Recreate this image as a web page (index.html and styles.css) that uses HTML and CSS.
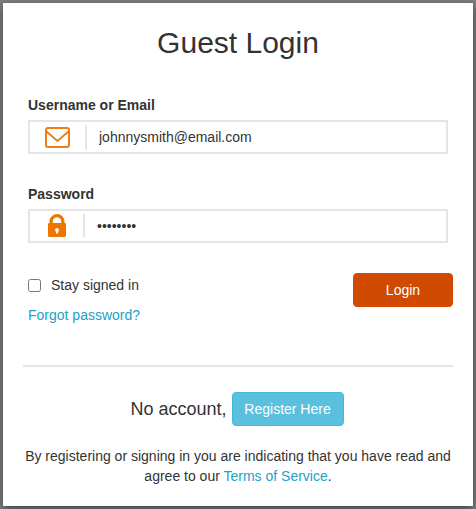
FILE: index.html
```html
<!DOCTYPE html>
<html lang="en">
<head>
<meta charset="utf-8">
<title>Guest Login</title>
<link rel="stylesheet" href="styles.css">
</head>
<body>
<main class="modal">
  <h1 class="title">Guest Login</h1>
  <form class="form">
    <label class="label" for="user">Username or Email</label>
    <div class="field">
      <span class="icon icon-mail">
        <svg width="25" height="21" viewBox="0 0 25 21" aria-hidden="true"><rect x="1" y="1" width="23" height="19" rx="2" fill="none" stroke="#ee7e1a" stroke-width="2"/><path d="M1.500 4.500 12.500 14 23.500 4.500" fill="none" stroke="#ee7e1a" stroke-width="2"/></svg>
      </span>
      <input class="input" id="user" type="text" value="johnnysmith@email.com">
    </div>
    <label class="label label-pass" for="pass">Password</label>
    <div class="field">
      <span class="icon icon-lock">
        <svg width="18" height="23" viewBox="0 0 18 23" aria-hidden="true"><path fill-rule="evenodd" fill="#ee7600" d="M1.500 9V7.500a7.500 7.500 0 0 1 15 0V9h.2A1.300 1.300 0 0 1 18 10.300V21.500A1.500 1.500 0 0 1 16.500 23H1.500A1.500 1.500 0 0 1 0 21.500V10.300A1.300 1.300 0 0 1 1.300 9ZM4.800 9h8.400V7.500a4.200 4.200 0 0 0-8.400 0Z"/><path fill="#fff" d="M9 14a2 2 0 0 1 1 3.700V19.500H8V17.700A2 2 0 0 1 9 14Z"/></svg>
      </span>
      <input class="input" id="pass" type="password" value="password">
    </div>
    <div class="actions">
      <div class="options">
        <label class="stay"><input class="check" type="checkbox"><span>Stay signed in</span></label>
        <a class="link forgot" href="#">Forgot password?</a>
      </div>
      <button class="btn btn-login" type="button">Login</button>
    </div>
  </form>
  <hr class="rule">
  <div class="register">
    <span class="no-account">No account,</span>
    <button class="btn btn-register" type="button">Register Here</button>
  </div>
  <p class="terms">By registering or signing in you are indicating that you have read and agree to our <a class="link" href="#">Terms of Service</a>.</p>
</main>
</body>
</html>
```
FILE: styles.css
```css
* { box-sizing: border-box; }
html, body { margin: 0; height: 100%; }
body {
  background: #7f7f7f;
  padding: 3px;
  font-family: "Liberation Sans", Arial, sans-serif;
  font-size: 14px;
  line-height: 20px;
  color: #333;
  overflow: hidden;
}
.modal {
  background: #fff;
  height: 503px;
  padding: 0 20px;
  box-shadow: 0 3px 9px rgba(0, 0, 0, 0.5);
}
.title {
  margin: 0;
  padding-top: 22px;
  height: 92px;
  font-size: 30px;
  font-weight: 400;
  line-height: 36px;
  text-align: center;
}
.form { padding: 0 0 0 5px; }
.label {
  display: block;
  font-weight: 700;
  height: 25px;
  line-height: 20px;
}
.label-pass { margin-top: 30px; }
.field {
  display: flex;
  align-items: center;
  width: 420px;
  height: 34px;
  border: 2px solid #e5e5e5;
}
.icon {
  display: flex;
  align-items: center;
  justify-content: center;
  border-right: 2px solid #e5e5e5;
}
.icon-mail { width: 57px; height: 25px; }
.icon-lock { width: 55px; height: 23px; margin-bottom: 1px; }
.input {
  flex: 1;
  min-width: 0;
  border: 0;
  outline: 0;
  padding: 0 0 0 12px;
  background: transparent;
  font: inherit;
  color: #333;
}
.actions {
  display: flex;
  justify-content: space-between;
  width: 425px;
  margin-top: 30px;
}
.options { display: flex; flex-direction: column; }
.stay {
  display: flex;
  align-items: center;
  height: 24px;
}
.check { width: 13px; height: 13px; margin: 0 10px 0 0; }
.forgot { margin-top: 8px; }
.link { color: #239fc8; text-decoration: none; }
.btn {
  font: inherit;
  color: #fff;
  border-radius: 4px;
  height: 34px;
  padding: 0;
  cursor: pointer;
}
.btn-login {
  width: 100px;
  background: #d04a02;
  border: 1px solid #d04a02;
}
.rule {
  margin: 40px 0 0;
  border: 0;
  height: 2px;
  background: #e5e5e5;
}
.register {
  display: flex;
  align-items: center;
  justify-content: center;
  gap: 5px;
  margin-top: 25px;
  padding-right: 2px;
}
.no-account { font-size: 18px; }
.btn-register {
  width: 112px;
  background: #5bc0de;
  border: 1px solid #46b8da;
}
.terms {
  margin: 20px 0 0;
  text-align: center;
}
```
